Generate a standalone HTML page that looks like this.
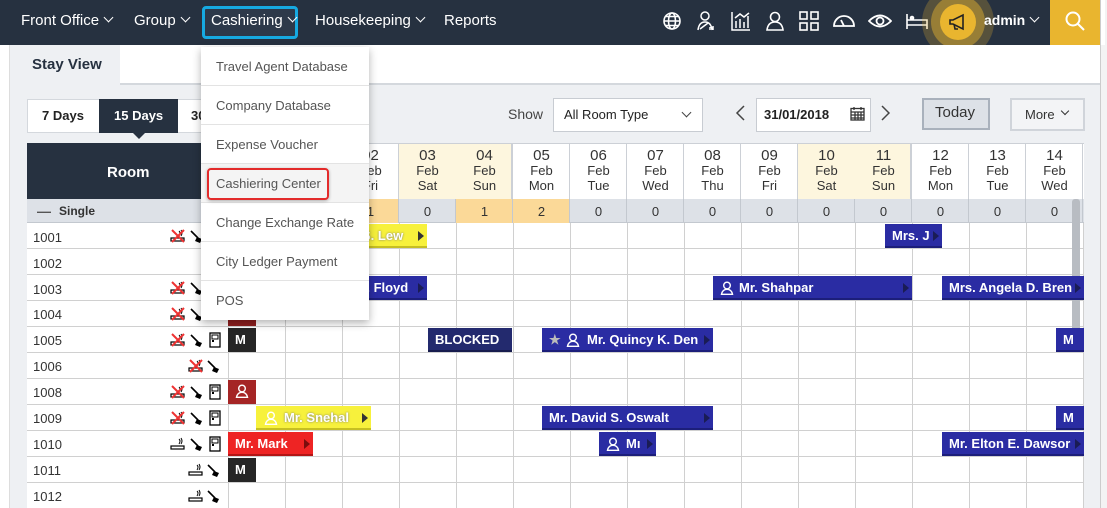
<!DOCTYPE html>
<html><head><meta charset="utf-8">
<style>
*{box-sizing:border-box;margin:0;padding:0}
body{width:1107px;height:508px;overflow:hidden;background:#eef0f3;font-family:"Liberation Sans",Arial,sans-serif;position:relative;color:#222}
.a{position:absolute}
.nav{left:0;top:0;width:1107px;height:45px;background:#263140}
span.t{position:absolute;top:12px;color:#fff;font-size:15px;white-space:nowrap}
.chev{display:inline-block;width:7px;height:7px;border-right:1.5px solid #fff;border-bottom:1.5px solid #fff;transform:rotate(45deg);margin-left:6px;position:relative;top:-4px}
.chev.a{position:absolute;margin:0}
.ic{position:absolute;top:10px}
.cell{position:absolute;text-align:center;font-size:13px}
.bar{position:absolute;height:24px;color:#fff;font-weight:bold;font-size:13px;line-height:24px;padding-left:7px;white-space:nowrap;overflow:hidden}
.blue{background:#2a2ca3;border-bottom:2px solid #1c1e7a}
.tri{position:absolute;right:3px;top:7px;width:0;height:0;border-left:6px solid #1a1c55;border-top:5px solid transparent;border-bottom:5px solid transparent}
.rn{position:absolute;left:33px;font-size:13px;color:#333}
.dd{left:201px;top:47px;width:168px;height:273px;background:#fff;box-shadow:0 3px 8px rgba(0,0,0,.3)}
.dd div{height:39px;border-bottom:1px solid #e3e3e3;font-size:13px;color:#555;padding:12px 0 0 15px}
</style></head><body>
<svg width="0" height="0" style="position:absolute">
<defs>
<symbol id="ns" viewBox="0 0 16 14"><rect x="1" y="9" width="13" height="3" fill="none" stroke="#000" stroke-width="1.2"/><path d="M9 2q2 2 0 5M11 1q2 3 0 6" stroke="#000" fill="none"/><path d="M2 1L14 13M14 1L2 13" stroke="#e33" stroke-width="2"/></symbol>
<symbol id="sm" viewBox="0 0 16 14"><rect x="1" y="9" width="13" height="3" fill="none" stroke="#000" stroke-width="1.2"/><path d="M9 2q2 2 0 5M11 1q2 3 0 6" stroke="#000" fill="none"/></symbol>
<symbol id="br" viewBox="0 0 14 14"><path d="M1 1L8 8" stroke="#000" stroke-width="1.6"/><path d="M7 7l5 2-2 4-5-2z" fill="#000"/></symbol>
<symbol id="dr" viewBox="0 0 12 16"><rect x="1" y="1" width="10" height="14" fill="#fff" stroke="#000" stroke-width="1.3"/><rect x="3" y="3" width="6" height="4" fill="none" stroke="#000"/><rect x="3" y="8" width="2" height="2" fill="#000"/></symbol>
<symbol id="pp" viewBox="0 0 14 14"><circle cx="7" cy="4.5" r="3.3" fill="none" stroke="#fff" stroke-width="1.4"/><path d="M1.5 13.3q1-5 5.5-5 4.5 0 5.5 5z" fill="none" stroke="#fff" stroke-width="1.4"/></symbol>
</defs></svg>

<div class="a nav"></div>
<div class="a" style="left:202px;top:6px;width:96px;height:33px;border:3px solid #16a9e1;border-radius:4px;background:#2d394a"></div>
<span class="t" style="left:21px">Front Office<i class="chev"></i></span>
<span class="t" style="left:134px">Group<i class="chev"></i></span>
<span class="t" style="left:211px">Cashiering<i class="chev"></i></span>
<span class="t" style="left:315px">Housekeeping<i class="chev"></i></span>
<span class="t" style="left:444px">Reports</span>
<!-- nav icons -->
<svg class="ic" style="left:661px" width="22" height="22" viewBox="0 0 22 22" fill="none" stroke="#fff" stroke-width="1.6"><circle cx="11" cy="11" r="8"/><ellipse cx="11" cy="11" rx="3.5" ry="8"/><path d="M3 11h16M5 6.5h12M5 15.5h12"/></svg>
<svg class="ic" style="left:695px" width="22" height="22" viewBox="0 0 22 22" fill="none" stroke="#fff" stroke-width="1.5"><circle cx="10" cy="6" r="4"/><path d="M3 20q1-8 7-8 6 0 7 8M5 19l8-6M15 17v3M18 16v4"/></svg>
<svg class="ic" style="left:730px" width="22" height="22" viewBox="0 0 22 22" fill="none" stroke="#fff" stroke-width="1.5"><path d="M2 2v18h18M6 18v-7M10 18v-9M14 18v-6M18 18v-12M5 8l5-4 4 3 5-4"/></svg>
<svg class="ic" style="left:764px" width="22" height="22" viewBox="0 0 22 22" fill="none" stroke="#fff" stroke-width="1.6"><circle cx="11" cy="7" r="4.5"/><path d="M3 20q1-8 8-8 7 0 8 8z"/></svg>
<svg class="ic" style="left:798px" width="22" height="22" viewBox="0 0 22 22" fill="none" stroke="#fff" stroke-width="1.6"><rect x="2" y="2" width="7" height="7"/><rect x="13" y="2" width="7" height="7"/><rect x="2" y="13" width="7" height="7"/><rect x="13" y="13" width="7" height="7"/></svg>
<svg class="ic" style="left:832px" width="24" height="22" viewBox="0 0 24 22" fill="none" stroke="#fff" stroke-width="1.8"><path d="M2 16a10 10 0 0 1 20 0z"/><path d="M12 16l-3-6"/></svg>
<svg class="ic" style="left:868px" width="24" height="22" viewBox="0 0 24 22" fill="none" stroke="#fff" stroke-width="1.8"><path d="M1 11q11-11 22 0q-11 11-22 0z"/><circle cx="12" cy="11" r="3.5"/></svg>
<svg class="ic" style="left:905px" width="24" height="22" viewBox="0 0 24 22" fill="none" stroke="#fff" stroke-width="1.6"><path d="M2 4v15M2 15h20v4M2 10h20v5M7 10V7"/><circle cx="7" cy="8" r="1.5"/></svg>
<div class="a" style="left:922px;top:-14px;width:72px;height:72px;border-radius:50%;background:rgba(233,181,47,.25)"></div>
<div class="a" style="left:931px;top:-5px;width:54px;height:54px;border-radius:50%;background:rgba(233,181,47,.45)"></div>
<div class="a" style="left:940px;top:4px;width:36px;height:36px;border-radius:50%;background:#e9b52f"></div>
<svg class="ic" style="left:948px;top:12px" width="20" height="20" viewBox="0 0 20 20" fill="none" stroke="#222" stroke-width="1.6"><path d="M2 8h3l10-5v14L5 12H2zM6 12l1 5h3"/></svg>
<span class="a" style="left:984px;top:12px;color:#fff;font-size:14px;font-weight:bold">admin<i class="chev"></i></span>
<div class="a" style="left:1050px;top:0;width:50px;height:45px;background:#e9b52f"></div>
<svg class="a" style="left:1064px;top:10px" width="22" height="22" viewBox="0 0 22 22" fill="none" stroke="#fff" stroke-width="2"><circle cx="9" cy="9" r="6.5"/><path d="M14 14l6 6"/></svg>
<div class="a" style="left:1100px;top:0;width:7px;height:508px;background:#f3f3f3;border-left:1px solid #ccc"></div>
<div class="a" style="left:1101px;top:0;width:4px;height:45px;background:#fff"></div>

<!-- header strip -->
<div class="a" style="left:0;top:45px;width:10px;height:463px;background:#fff;border-right:1px solid #ddd"></div>
<div class="a" style="left:11px;top:45px;width:1089px;height:40px;background:#fff;border-bottom:2px solid #d4d8dd"></div>
<div class="a" style="left:11px;top:45px;width:109px;height:40px;background:#eef0f3"></div>
<span class="a" style="left:32px;top:56px;font-size:15px;font-weight:bold;color:#263140">Stay View</span>

<!-- toolbar -->
<div class="a" style="left:27px;top:99px;width:200px;height:34px;background:#fff;border:1px solid #d4d8dd"></div>
<span class="a" style="left:42px;top:108px;font-size:13px;font-weight:bold">7 Days</span>
<div class="a" style="left:99px;top:99px;width:79px;height:34px;background:#263140"></div>
<span class="a" style="left:114px;top:108px;font-size:13px;font-weight:bold;color:#fff">15 Days</span>
<div class="a" style="left:131px;top:131px;width:0;height:0;border-left:8px solid transparent;border-right:8px solid transparent;border-top:8px solid #263140"></div>
<span class="a" style="left:191px;top:108px;font-size:13px;font-weight:bold">30</span>
<span class="a" style="left:508px;top:106px;font-size:14px;color:#444">Show</span>
<div class="a" style="left:553px;top:98px;width:150px;height:34px;background:#fff;border:1px solid #c8ccd2"></div>
<span class="a" style="left:564px;top:107px;font-size:13px">All Room Type</span>
<i class="chev a" style="left:683px;top:109px;border-color:#444"></i>
<svg class="a" style="left:734px;top:104px" width="12" height="18" viewBox="0 0 12 18" fill="none" stroke="#444" stroke-width="1.5"><path d="M10 2L3 9l7 7"/></svg>
<div class="a" style="left:756px;top:98px;width:115px;height:34px;background:#fff;border:1px solid #c8ccd2"></div>
<span class="a" style="left:764px;top:107px;font-size:13px;font-weight:bold;color:#222">31/01/2018</span>
<svg class="a" style="left:850px;top:106px" width="15" height="15" viewBox="0 0 15 15" fill="none" stroke="#333" stroke-width="1.3"><rect x="1" y="2.5" width="13" height="11.5"/><path d="M1 6h13M4 1v3M11 1v3M5 6v8M8 6v8M11 6v8M1 9h13M1 12h13"/></svg>
<svg class="a" style="left:880px;top:104px" width="12" height="18" viewBox="0 0 12 18" fill="none" stroke="#444" stroke-width="1.5"><path d="M2 2l7 7-7 7"/></svg>
<div class="a" style="left:922px;top:98px;width:68px;height:32px;background:#dde1e7;border:2px solid #a9b1bc"></div>
<span class="a" style="left:935px;top:104px;font-size:15px;color:#333">Today</span>
<div class="a" style="left:1010px;top:98px;width:75px;height:33px;background:#f3f4f6;border:2px solid #d0d4da"></div>
<span class="a" style="left:1025px;top:107px;font-size:13px;color:#333">More</span>
<i class="chev a" style="left:1062px;top:108px;border-color:#333;width:6px;height:6px"></i>

<!-- grid header -->
<div class="a" style="left:27px;top:143px;width:201px;height:56px;background:#263140"></div>
<span class="a" style="left:107px;top:164px;color:#fff;font-size:15px;font-weight:bold">Room</span>
<div class="a" style="left:228px;top:143px;width:856px;height:56px;background:#fff;background-image:repeating-linear-gradient(90deg,transparent 0 56px,#ccd0d6 56px 57px)"></div>
<div class="a" style="left:399px;top:143px;width:113px;height:56px;background:#fdf6de;border-right:1px solid #ccd0d6"></div>
<div class="a" style="left:797px;top:143px;width:114px;height:56px;background:#fdf6de;border-left:1px solid #ccd0d6;border-right:1px solid #ccd0d6"></div>
<div class="a" style="left:228px;top:143px;width:856px;height:1px;background:#ccd0d6"></div>
<!-- count row -->
<div class="a" style="left:27px;top:199px;width:1057px;height:24px;background:#dde1e7;border-bottom:1px solid #c3c8cf"></div>
<div class="a" style="left:342px;top:199px;width:57px;height:24px;background:#fbd998"></div>
<div class="a" style="left:456px;top:199px;width:114px;height:24px;background:#fbd998"></div>
<div class="a" style="left:228px;top:199px;width:856px;height:24px;background-image:repeating-linear-gradient(90deg,transparent 0 56px,#c3c8cf 56px 57px)"></div>
<span class="a" style="left:37px;top:203px;font-size:14px;font-weight:bold;color:#555">—</span>
<span class="a" style="left:59px;top:204px;font-size:12px;font-weight:bold;color:#333">Single</span>

<!-- body grid -->
<div class="a" style="left:27px;top:223px;width:1057px;height:285px;background:#fff;background-image:repeating-linear-gradient(180deg,transparent 0 25px,#d0d0d0 25px 26px)"></div>
<div class="a" style="left:228px;top:223px;width:856px;height:285px;background-image:repeating-linear-gradient(90deg,#d0d0d0 0 1px,transparent 1px 57px)"></div>
<div class="a" style="left:1083px;top:223px;width:1px;height:285px;background:#d0d0d0"></div>
<div class="a" style="left:1072px;top:199px;width:8px;height:132px;background:#b8bcc2;border-radius:3px"></div>

<span class="rn" style="top:230px">1001</span>
<span class="rn" style="top:256px">1002</span>
<span class="rn" style="top:282px">1003</span>
<span class="rn" style="top:307px">1004</span>
<span class="rn" style="top:333px">1005</span>
<span class="rn" style="top:359px">1006</span>
<span class="rn" style="top:385px">1008</span>
<span class="rn" style="top:411px">1009</span>
<span class="rn" style="top:437px">1010</span>
<span class="rn" style="top:463px">1011</span>
<span class="rn" style="top:489px">1012</span>
<!-- icons -->
<svg class="a" style="left:170px;top:229px" width="16" height="14"><use href="#ns"/></svg><svg class="a" style="left:190px;top:230px" width="14" height="14"><use href="#br"/></svg>
<svg class="a" style="left:170px;top:281px" width="16" height="14"><use href="#ns"/></svg><svg class="a" style="left:190px;top:282px" width="14" height="14"><use href="#br"/></svg>
<svg class="a" style="left:170px;top:307px" width="16" height="14"><use href="#ns"/></svg><svg class="a" style="left:190px;top:308px" width="14" height="14"><use href="#br"/></svg>
<svg class="a" style="left:170px;top:333px" width="16" height="14"><use href="#ns"/></svg><svg class="a" style="left:190px;top:334px" width="14" height="14"><use href="#br"/></svg><svg class="a" style="left:209px;top:332px" width="12" height="16"><use href="#dr"/></svg>
<svg class="a" style="left:188px;top:359px" width="16" height="14"><use href="#ns"/></svg><svg class="a" style="left:207px;top:360px" width="14" height="14"><use href="#br"/></svg>
<svg class="a" style="left:170px;top:385px" width="16" height="14"><use href="#ns"/></svg><svg class="a" style="left:190px;top:386px" width="14" height="14"><use href="#br"/></svg><svg class="a" style="left:209px;top:384px" width="12" height="16"><use href="#dr"/></svg>
<svg class="a" style="left:170px;top:411px" width="16" height="14"><use href="#ns"/></svg><svg class="a" style="left:190px;top:412px" width="14" height="14"><use href="#br"/></svg><svg class="a" style="left:209px;top:410px" width="12" height="16"><use href="#dr"/></svg>
<svg class="a" style="left:170px;top:437px" width="16" height="14"><use href="#sm"/></svg><svg class="a" style="left:190px;top:438px" width="14" height="14"><use href="#br"/></svg><svg class="a" style="left:209px;top:436px" width="12" height="16"><use href="#dr"/></svg>
<svg class="a" style="left:188px;top:463px" width="16" height="14"><use href="#sm"/></svg><svg class="a" style="left:207px;top:464px" width="14" height="14"><use href="#br"/></svg>
<svg class="a" style="left:188px;top:489px" width="16" height="14"><use href="#sm"/></svg><svg class="a" style="left:207px;top:490px" width="14" height="14"><use href="#br"/></svg>

<!-- bookings -->
<div class="bar" style="left:355px;top:224px;width:72px;background:#f7f13c;color:#fff;border-bottom:2px solid #c6bf22;text-shadow:0 0 2px #777">S. Lew<i class="tri" style="border-left-color:#333"></i></div>
<div class="bar blue" style="left:885px;top:224px;width:57px">Mrs. J<i class="tri"></i></div>
<div class="bar blue" style="left:355px;top:276px;width:72px">r. Floyd<i class="tri"></i></div>
<div class="bar blue" style="left:713px;top:276px;width:199px;padding-left:26px"><svg class="a" style="left:7px;top:5px" width="14" height="14"><use href="#pp"/></svg>Mr. Shahpar<i class="tri"></i></div>
<div class="bar blue" style="left:942px;top:276px;width:142px">Mrs. Angela D. Bren<i class="tri"></i></div>
<div class="bar" style="left:228px;top:302px;width:28px;background:#8e1f1f"></div>
<div class="bar" style="left:228px;top:328px;width:28px;background:#262626">M</div>
<div class="bar" style="left:428px;top:328px;width:84px;background:#232a6e;border-bottom:2px solid #171c4e">BLOCKED</div>
<div class="bar blue" style="left:542px;top:328px;width:171px;padding-left:27px"><span class="a" style="left:7px;top:0;color:#bbb;font-size:13px">★</span><svg class="a" style="left:24px;top:5px" width="14" height="14"><use href="#pp"/></svg><span style="padding-left:18px">Mr. Quincy K. Den</span><i class="tri"></i></div>
<div class="bar blue" style="left:1056px;top:328px;width:28px">M</div>
<div class="bar" style="left:228px;top:380px;width:28px;background:#a52525;padding-left:6px"><svg class="a" style="left:7px;top:4px" width="14" height="14"><use href="#pp"/></svg></div>
<div class="bar" style="left:256px;top:406px;width:115px;background:#f7f13c;border-bottom:2px solid #c6bf22;padding-left:28px;text-shadow:0 0 2px #777"><svg class="a" style="left:8px;top:5px" width="14" height="14"><use href="#pp"/></svg>Mr. Snehal<i class="tri" style="border-left-color:#333"></i></div>
<div class="bar blue" style="left:542px;top:406px;width:171px">Mr. David S. Oswalt<i class="tri"></i></div>
<div class="bar blue" style="left:1056px;top:406px;width:28px">M</div>
<div class="bar" style="left:228px;top:432px;width:85px;background:#ee2424;border-bottom:2px solid #b31515">Mr. Mark<i class="tri" style="border-left-color:#7a0d0d"></i></div>
<div class="bar blue" style="left:599px;top:432px;width:57px;padding-left:27px"><svg class="a" style="left:7px;top:5px" width="14" height="14"><use href="#pp"/></svg>Mı<i class="tri"></i></div>
<div class="bar blue" style="left:942px;top:432px;width:142px">Mr. Elton E. Dawsor<i class="tri"></i></div>
<div class="bar" style="left:228px;top:458px;width:28px;background:#262626">M</div>

<!-- dates -->
<div class="a" style="left:228px;top:148px;width:856px;font-size:13px;color:#333;line-height:15px">
<div class="cell" style="left:114px;width:57px"><span style="font-size:15px">02</span><br>Feb<br>Fri</div>
<div class="cell" style="left:171px;width:57px"><span style="font-size:15px">03</span><br>Feb<br>Sat</div>
<div class="cell" style="left:228px;width:57px"><span style="font-size:15px">04</span><br>Feb<br>Sun</div>
<div class="cell" style="left:285px;width:57px"><span style="font-size:15px">05</span><br>Feb<br>Mon</div>
<div class="cell" style="left:342px;width:57px"><span style="font-size:15px">06</span><br>Feb<br>Tue</div>
<div class="cell" style="left:399px;width:57px"><span style="font-size:15px">07</span><br>Feb<br>Wed</div>
<div class="cell" style="left:456px;width:57px"><span style="font-size:15px">08</span><br>Feb<br>Thu</div>
<div class="cell" style="left:513px;width:57px"><span style="font-size:15px">09</span><br>Feb<br>Fri</div>
<div class="cell" style="left:570px;width:57px"><span style="font-size:15px">10</span><br>Feb<br>Sat</div>
<div class="cell" style="left:627px;width:57px"><span style="font-size:15px">11</span><br>Feb<br>Sun</div>
<div class="cell" style="left:684px;width:57px"><span style="font-size:15px">12</span><br>Feb<br>Mon</div>
<div class="cell" style="left:741px;width:57px"><span style="font-size:15px">13</span><br>Feb<br>Tue</div>
<div class="cell" style="left:798px;width:57px"><span style="font-size:15px">14</span><br>Feb<br>Wed</div>
</div>
<div class="a" style="left:228px;top:204px;width:856px;font-size:13px;color:#333">
<div class="cell" style="left:114px;width:57px">1</div>
<div class="cell" style="left:171px;width:57px">0</div>
<div class="cell" style="left:228px;width:57px">1</div>
<div class="cell" style="left:285px;width:57px">2</div>
<div class="cell" style="left:342px;width:57px">0</div><div class="cell" style="left:399px;width:57px">0</div><div class="cell" style="left:456px;width:57px">0</div><div class="cell" style="left:513px;width:57px">0</div><div class="cell" style="left:570px;width:57px">0</div><div class="cell" style="left:627px;width:57px">0</div><div class="cell" style="left:684px;width:57px">0</div><div class="cell" style="left:741px;width:57px">0</div><div class="cell" style="left:798px;width:57px">0</div>
</div>

<!-- dropdown -->
<div class="a dd">
<div>Travel Agent Database</div>
<div>Company Database</div>
<div>Expense Voucher</div>
<div style="background:#f4f4f4">Cashiering Center</div>
<div>Change Exchange Rate</div>
<div>City Ledger Payment</div>
<div style="border:0">POS</div>
</div>
<div class="a" style="left:207px;top:168px;width:122px;height:32px;border:2px solid #e32b2b;border-radius:4px;box-shadow:0 1px 3px rgba(0,0,0,.3)"></div>
</body></html>
